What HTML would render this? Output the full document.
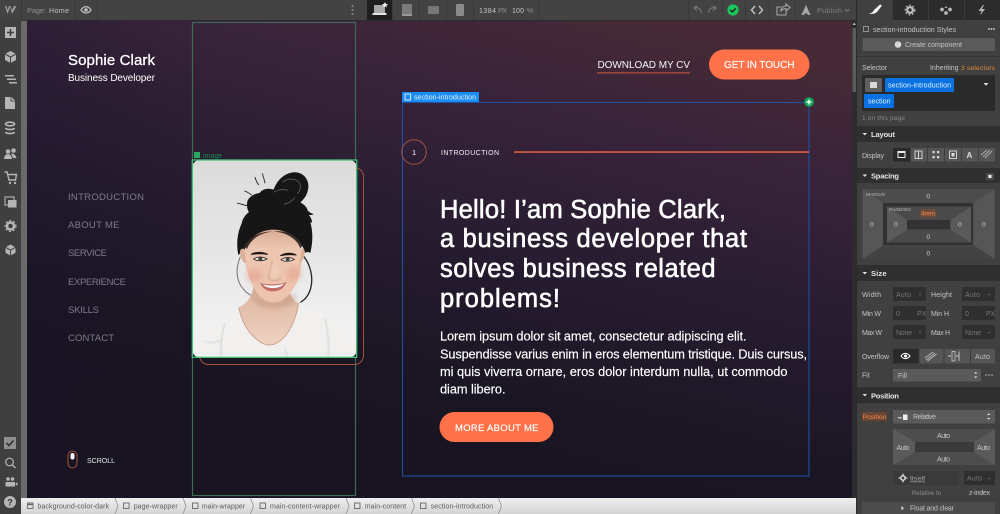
<!DOCTYPE html>
<html><head><meta charset="utf-8"><style>
html,body{margin:0;padding:0;background:#333;width:1000px;height:514px;overflow:hidden}
svg{display:block;filter:blur(.2px)}
text{font-family:"Liberation Sans",sans-serif;white-space:pre}
.w{fill:#fff}
.h{fill:#fff;font-size:25.5px;stroke:#fff;stroke-width:.6px}
.p{fill:#fff;font-size:12.8px;stroke:#fff;stroke-width:.15px}
.n{fill:#7f7a8a;font-size:9.5px}
.t{fill:#a8a8a8;font-size:7px}
.l{fill:#c4c4c4;font-size:7px}
.d{fill:#767676;font-size:7px}
.hd{fill:#e6e6e6;font-size:7.5px;font-weight:bold}
.b{fill:#5c5c5c;font-size:7px}
.m{fill:#d0d0d0;font-size:6.5px}
</style></head><body>
<svg width="1000" height="514" viewBox="0 0 1000 514" xmlns="http://www.w3.org/2000/svg">
<defs>
<linearGradient id="bg" gradientUnits="userSpaceOnUse" x1="560" y1="0" x2="440" y2="498">
<stop offset="0" stop-color="#462a36"/><stop offset=".22" stop-color="#38233a"/><stop offset=".5" stop-color="#271c30"/><stop offset=".8" stop-color="#191522"/><stop offset="1" stop-color="#181420"/>
</linearGradient>
<linearGradient id="lf" x1="0" x2="1" y1="0" y2="0"><stop offset="0" stop-color="#1a1530" stop-opacity=".22"/><stop offset=".6" stop-color="#1a1530" stop-opacity="0"/></linearGradient>
<linearGradient id="ph" x1="0" x2="0" y1="0" y2="1"><stop offset="0" stop-color="#dbdcda"/><stop offset=".5" stop-color="#e7e7e7"/><stop offset="1" stop-color="#f5f5f5"/></linearGradient>
<linearGradient id="bc" x1="0" x2="0" y1="0" y2="1"><stop offset="0" stop-color="#efefef"/><stop offset="1" stop-color="#d4d4d4"/></linearGradient>
<linearGradient id="sk" x1="0" x2="0" y1="0" y2="1"><stop offset="0" stop-color="#cfa38c"/><stop offset=".3" stop-color="#e2bda8"/><stop offset="1" stop-color="#efd2c2"/></linearGradient>
<linearGradient id="fc" x1="0" x2="0" y1="0" y2="1"><stop offset="0" stop-color="#d9ab94"/><stop offset=".25" stop-color="#ecc6b0"/><stop offset="1" stop-color="#eec4ae"/></linearGradient>
<clipPath id="pc"><rect x="22" y="45" width="493" height="592" rx="22"/></clipPath>
<filter id="b0" x="-10%" y="-10%" width="120%" height="120%"><feGaussianBlur stdDeviation="1"/></filter>
<filter id="b1" x="-20%" y="-20%" width="140%" height="140%"><feGaussianBlur stdDeviation="2"/></filter>
<filter id="b2" x="-50%" y="-50%" width="200%" height="200%"><feGaussianBlur stdDeviation="9"/></filter>
</defs>

<rect width="1000" height="514" fill="#3a3a3a"/>
<!-- canvas -->
<rect x="27" y="20" width="826" height="478" fill="url(#bg)"/>
<rect x="27" y="20" width="300" height="478" fill="url(#lf)"/>
<rect x="21" y="20" width="6" height="478" fill="#6a6a6a"/>

<!-- green column -->
<rect x="192.5" y="22.5" width="163" height="473" fill="none" stroke="#3f6a58" stroke-width="1.2"/>

<!-- header -->
<text x="68" y="65" class="w" font-size="15" textLength="87" stroke="#fff" stroke-width=".3">Sophie Clark</text>
<text x="68" y="81" class="w" font-size="10" textLength="87">Business Developer</text>

<!-- nav -->
<text x="68" y="200" class="n" textLength="76">INTRODUCTION</text>
<text x="68" y="228" class="n" textLength="51.5">ABOUT ME</text>
<text x="68" y="256" class="n" textLength="39">SERVICE</text>
<text x="68" y="285" class="n" textLength="58">EXPERIENCE</text>
<text x="68" y="313" class="n" textLength="31">SKILLS</text>
<text x="68" y="341" class="n" textLength="46">CONTACT</text>

<!-- scroll -->
<rect x="68" y="451" width="9" height="17" rx="4.5" fill="none" stroke="#a5503f" stroke-width="1"/>
<rect x="70.5" y="453" width="4" height="6.5" rx="2" fill="#fff"/>
<text x="87" y="463" class="w" font-size="7" textLength="28" fill-opacity=".9">SCROLL</text>

<!-- top right CTAs -->
<text x="597.5" y="68" class="w" font-size="10" textLength="92.5" fill-opacity=".95">DOWNLOAD MY CV</text>
<rect x="597" y="72.3" width="93" height="1.2" fill="#b4523f"/>
<rect x="709" y="49.5" width="100.5" height="30" rx="15" fill="#ff7148"/>
<text x="724" y="68" class="w" font-size="10" textLength="70.5" stroke="#fff" stroke-width=".15">GET IN TOUCH</text>

<!-- section -->
<rect x="402.5" y="102.5" width="406.5" height="373.5" fill="none" stroke="#1f4fa0" stroke-width="1.1"/>
<rect x="402" y="92" width="77" height="10" fill="#1a8cf5"/>
<rect x="405" y="94" width="5.500" height="6" fill="none" stroke="#fff" stroke-width=".8"/>
<text x="414" y="99.5" class="w" font-size="7" textLength="62" fill-opacity=".9">section-introduction</text>
<circle cx="809" cy="102" r="4.8" fill="#11a85a"/>
<path d="M809 99.5v5M806.5 102h5" stroke="#fff" stroke-width="1.4"/>

<circle cx="414" cy="152" r="12.3" fill="none" stroke="#a5503f" stroke-width="1"/>
<text x="412" y="155" class="w" font-size="7.5">1</text>
<text x="441" y="155" class="w" font-size="7" textLength="58" fill-opacity=".95">INTRODUCTION</text>
<rect x="514" y="151.3" width="295" height="1.5" fill="#e8623f"/>

<!-- headline -->
<text x="440" y="218" class="h" textLength="286">Hello! I’am Sophie Clark,</text>
<text x="440" y="247" class="h" textLength="307">a business developer that</text>
<text x="440" y="277" class="h" textLength="275.5">solves business related</text>
<text x="440" y="307" class="h" textLength="120">problems!</text>

<text x="440" y="340.5" class="p" textLength="306.5">Lorem ipsum dolor sit amet, consectetur adipiscing elit.</text>
<text x="440" y="358.3" class="p" textLength="367">Suspendisse varius enim in eros elementum tristique. Duis cursus,</text>
<text x="440" y="376" class="p" textLength="347.5">mi quis viverra ornare, eros dolor interdum nulla, ut commodo</text>
<text x="440" y="393.5" class="p" textLength="65.5">diam libero.</text>

<rect x="439.5" y="412" width="114" height="30" rx="15" fill="#ff7148"/>
<text x="455" y="431" class="w" font-size="9.5" textLength="83.5" stroke="#fff" stroke-width=".15">MORE ABOUT ME</text>

<!-- image frame -->
<rect x="199.5" y="167.5" width="164" height="197" rx="9" fill="none" stroke="#a5503f" stroke-width="1"/>
<g transform="translate(185 145) scale(.33333)">
 <rect x="22" y="45" width="493" height="592" fill="#201a2c"/>
 <g clip-path="url(#pc)">
  <rect x="22" y="45" width="493" height="592" fill="url(#ph)"/>
  <!-- stray strands -->
  <path d="M166 335c-12 30-14 62 2 88 8 12 18 22 30 28" fill="none" stroke="#77716f" stroke-width="3" filter="url(#b0)"/>
  <path d="M352 330c18 18 30 50 28 82-2 26-14 50-34 60" fill="none" stroke="#2a2526" stroke-width="4" filter="url(#b0)"/>
  <!-- shirt -->
  <g filter="url(#b0)">
   <path d="M22 640V598c10-22 28-42 56-56 30-14 60-30 86-55 4-4 176-14 178-12 30 12 62 22 92 38 36 20 62 52 81 92v35z" fill="#f1f0ef"/>
   <path d="M120 535c-10 30-14 62-12 100M420 520c10 36 12 76 10 115M60 590c15 4 30 3 46-2M300 610c2 8 6 18 8 28" stroke="#d4d3d1" stroke-width="3.500" fill="none" filter="url(#b1)"/>
   <!-- neck and chest -->
   <path d="M205 420c0 28-14 52-44 68 8 30 20 62 42 84 16 16 32 28 50 28 22 0 44-18 60-44 14-24 24-54 28-82-20-8-30-30-30-56z" fill="url(#sk)"/>
   <path d="M161 488c8 34 22 64 42 84 16 16 32 28 50 28 22 0 44-18 60-44 14-24 24-54 28-82" fill="none" stroke="#c69880" stroke-width="2.500"/>
  </g>
  <path d="M205 445c20 32 90 36 122-2l4 24c-34 28-100 30-124 0z" fill="#b98a72" opacity=".55" filter="url(#b2)"/>
  <!-- hair mass -->
  <g filter="url(#b0)">
   <path d="M160 330c-6-30-4-62 8-90 8-18 16-28 24-38-6-10-8-22-4-36 8-14 22-20 36-22 8-12 24-16 42-10 8-24 28-48 58-52 30-2 48 20 46 46-2 20-12 34-24 44 14 8 20 16 22 24 6 8 12 8 18 12-6 2-10 2-14 2 10 14 12 26 4 22 8 28 8 58 0 92-6-4-12-4-16 0-10-50-80-90-174-10-6-2-16 6-26 16z" fill="#161313"/>
   <ellipse cx="262" cy="240" rx="92" ry="60" fill="#171414"/>
   <path d="M222 120c-6-6-10-16-12-24M186 182c-10-2-20-6-30-8M200 150c-8-6-14-10-22-12M355 215c10 4 18 14 22 24M345 188c8-3 12-3 18 0M240 115c-2-10-4-18-8-30" stroke="#1c1818" stroke-width="2.500" fill="none"/>
   <path d="M292 112c14-12 38-14 50 0 8 12 4 26-6 34M266 142c16-10 30-10 44-6M296 178c14-2 28-12 34-20" stroke="#625b5b" stroke-width="2.500" fill="none"/>
  </g>
  <!-- face -->
  <g filter="url(#b0)">
   <path d="M178 318c6-34 44-64 88-64 40 0 78 28 84 62 2 34-2 66-12 90-10 26-30 50-48 60-8 5-18 7-28 6-26-2-46-24-58-48-14-28-28-70-26-106z" fill="url(#fc)"/>
   <path d="M178 312c-8-4-14 2-13 12 2 16 8 28 18 32zM350 312c6-3 10 2 9 12-2 16-8 26-16 32z" fill="#dcae96"/>
  </g>
  <path d="M186 312c10-28 40-50 78-52-36-2-70 14-86 44zM346 310c-8-26-40-48-80-50 38-6 72 12 86 42z" fill="#3a2e2c" filter="url(#b0)"/>
  <ellipse cx="208" cy="392" rx="24" ry="22" fill="#e0907e" opacity=".42" filter="url(#b2)"/>
  <ellipse cx="326" cy="386" rx="22" ry="22" fill="#e0907e" opacity=".42" filter="url(#b2)"/>
  <path d="M262 345c-4 24-10 42-12 52 4 8 12 10 18 10s16-2 20-10" fill="none" stroke="#c08e76" stroke-width="2.500" filter="url(#b1)"/>
  <ellipse cx="268" cy="375" rx="9" ry="24" fill="#f6dccb" opacity=".6" filter="url(#b2)"/>
  <!-- brows -->
  <path d="M198 328c14-8 34-8 50 0-16-3-34-2-50 0zM286 332c14-9 34-10 48-2-14-2-32-1-48 2z" fill="#1e1919" stroke="#1e1919" stroke-width="3" filter="url(#b0)"/>
  <!-- eyes -->
  <g filter="url(#b0)">
   <path d="M206 342c10-8 28-8 40 0-12 7-30 7-40 0z" fill="#e9e4de" stroke="#2a2525" stroke-width="2.500"/>
   <path d="M288 344c10-8 28-9 40-1-12 7-30 8-40 1z" fill="#e9e4de" stroke="#2a2525" stroke-width="2.500"/>
   <circle cx="226" cy="341" r="6" fill="#433f38"/><circle cx="308" cy="342" r="6" fill="#433f38"/>
  </g>
  <!-- mouth -->
  <g filter="url(#b0)">
   <path d="M226 414c22 6 56 6 78-3-8 22-24 28-40 28-18 0-32-8-38-25z" fill="#c46a68"/>
   <path d="M233 418c20 5 44 5 64-2-6 9-18 13-31 13-14 0-26-3-33-11z" fill="#fafafa"/>
  </g>
 </g>
 <rect x="22" y="45" width="493" height="592" fill="none" stroke="#44c178" stroke-width="4"/>
</g>
<rect x="194" y="152" width="6" height="6" fill="#28a760"/>
<text x="203" y="158" font-size="7" fill="#1f8a52" textLength="19">image</text>

<!-- top bar -->
<rect x="0" y="0" width="1000" height="20" fill="#434343"/>
<rect x="0" y="20" width="853" height=".8" fill="#2b2b2b"/>
<path d="M5 6l2.500 8 2.800-7 1.700 7 4.500-8-2.500 0-2 4-1.500-4h-1.400l-1.600 4-1-4z" fill="#9c9c9c"/>
<g fill="#393939"><rect x="21" y="0" width="1" height="20"/><rect x="75" y="0" width="1" height="20"/><rect x="97" y="0" width="1" height="20"/><rect x="392" y="0" width="1" height="20"/><rect x="419" y="0" width="1" height="20"/><rect x="446" y="0" width="1" height="20"/><rect x="473" y="0" width="1" height="20"/><rect x="538" y="0" width="1" height="20"/><rect x="688" y="0" width="1" height="20"/><rect x="722" y="0" width="1" height="20"/><rect x="745" y="0" width="1" height="20"/><rect x="769" y="0" width="1" height="20"/><rect x="795" y="0" width="1" height="20"/></g>
<text x="27" y="13" font-size="7.5" textLength="19" fill="#8e8e8e">Page:</text>
<text x="49" y="13" class="l" font-size="7.5" textLength="20">Home</text>
<path d="M81 10c3-4.500 7-4.500 10 0-3 4-7 4-10 0z" fill="none" stroke="#bdbdbd" stroke-width="1.300"/><circle cx="86" cy="10" r="1.800" fill="#bdbdbd"/>
<g fill="#8a8a8a"><circle cx="352.5" cy="6" r="1"/><circle cx="352.5" cy="10" r="1"/><circle cx="352.5" cy="14" r="1"/></g>
<rect x="367" y="0" width="25" height="20" fill="#1f1f1f"/>
<rect x="374" y="5" width="11" height="8" fill="#a8a8a8"/><rect x="372.5" y="13" width="14" height="2" fill="#e0e0e0"/>
<path d="M385 2l.9 1.900 2.100.2-1.600 1.300.5 2-1.900-1.100-1.900 1.100.5-2-1.600-1.300 2.100-.2z" fill="#fff"/>
<rect x="402" y="4" width="10" height="10" fill="#7a7a7a"/><rect x="402" y="14" width="10" height="2" fill="#999"/>
<rect x="428" y="6" width="11" height="8" rx="1" fill="#777"/>
<rect x="456" y="4" width="8" height="12" rx="1" fill="#8a8a8a"/>
<text x="479" y="13" class="l" font-size="7.500" textLength="17">1384</text>
<text x="498" y="13" font-size="7.500" textLength="9" fill="#8e8e8e">PX</text>
<text x="512" y="13" class="l" font-size="7.500" textLength="12">100</text>
<text x="526.5" y="13" font-size="7.500" fill="#8e8e8e">%</text>
<path d="M701 13c1-4-3-6-6-5M697 5.500l-3 2.500 3 2.500" fill="none" stroke="#777" stroke-width="1.100"/>
<path d="M709 13c-1-4 3-6 6-5M713 5.500l3 2.500-3 2.500" fill="none" stroke="#777" stroke-width="1.100"/>
<circle cx="733" cy="10" r="5.600" fill="#1cc45c"/><path d="M730.300 10l2 2 3.400-3.600" fill="none" stroke="#1a1a1a" stroke-width="1.300"/>
<path d="M755 6l-3.500 4 3.500 4M759 6l3.500 4-3.500 4" fill="none" stroke="#bdbdbd" stroke-width="1.500"/>
<path d="M786 10v5h-9V7h4M781 11c0-3 2-5 5-5V4l4 3.500-4 3.500V8.500c-2 0-3.500 1-5 2.500z" fill="none" stroke="#a8a8a8" stroke-width="1.100"/>
<path d="M806 5l4.500 10h-2l-2.500-2-2.500 2h-2z" fill="#a8a8a8"/>
<text x="817" y="13" font-size="7.500" textLength="25" fill="#7d7d7d">Publish</text>
<path d="M845 9l2.200 2.200 2.200-2.200" fill="none" stroke="#7d7d7d" stroke-width="1"/>

<!-- scrollbar -->
<rect x="852" y="20" width="5" height="478" fill="#2c2c2c"/>
<rect x="852.5" y="28" width="3.500" height="64" fill="#5c5c5c"/>
<path d="M852.5 25l1.700-2.500 1.700 2.500z" fill="#bdbdbd"/>

<!-- left icons -->
<rect x="0" y="20" width="21" height="494" fill="#3f3f3f"/>
<rect x="5" y="27" width="11" height="11" fill="#b5b5b5"/><path d="M10.500 29v7M7 32.500h7" stroke="#3a3a3a" stroke-width="1.500"/>
<path d="M10.500 51l5.500 3v6l-5.500 3-5.500-3v-6z" fill="#b5b5b5"/><path d="M5 54l5.500 3 5.500-3M10.500 57v6" stroke="#3f3f3f" stroke-width="1" fill="none"/>
<g fill="#b5b5b5"><rect x="5" y="75" width="9" height="1.500"/><rect x="7" y="78.500" width="9" height="1.500"/><rect x="9" y="82" width="8" height="1.500"/></g>
<path d="M5 97h6.500l3.500 3.500V109H5z" fill="#b5b5b5"/><path d="M11 97v4h4" fill="none" stroke="#3f3f3f" stroke-width=".8"/>
<g fill="none" stroke="#b5b5b5" stroke-width="1.700"><ellipse cx="10" cy="124" rx="4.500" ry="1.800"/><path d="M5.500 128c1 2 8 2 9 0M5.500 132c1 2 8 2 9 0"/></g>
<g fill="#b5b5b5"><circle cx="8" cy="151.500" r="2.300"/><circle cx="13.500" cy="150.500" r="2.300"/><path d="M4 159c0-3 2-5 4-5s4 2 4 5zM11 153.500c3 0 5 2 5.500 4.500H13z"/></g>
<path d="M4.500 172h2.500l2 8h6.500l1-5.500H8" fill="none" stroke="#b5b5b5" stroke-width="1.400"/><circle cx="10" cy="183" r="1.200" fill="#b5b5b5"/><circle cx="15" cy="183" r="1.200" fill="#b5b5b5"/>
<rect x="5" y="197" width="9" height="8" fill="none" stroke="#b5b5b5" stroke-width="1.100"/><rect x="8" y="200" width="8.500" height="7.500" fill="#b5b5b5"/>
<circle cx="10.500" cy="226" r="3.500" fill="none" stroke="#b5b5b5" stroke-width="2.500"/><circle cx="10.500" cy="226" r="5.400" fill="none" stroke="#b5b5b5" stroke-width="1.200" stroke-dasharray="2 2"/>
<path d="M10.500 244.500l5 2.800v5.500l-5 2.800-5-2.800v-5.500z" fill="#b5b5b5"/><path d="M5.500 247.300l5 2.800 5-2.800M10.500 250v5.500" stroke="#3f3f3f" stroke-width="1" fill="none"/>
<rect x="4" y="437" width="12" height="12" fill="#8f8f8f"/><path d="M6.500 443l2.500 2.500 4.500-5" fill="none" stroke="#2c2c2c" stroke-width="1.500"/>
<circle cx="9.500" cy="462" r="3.800" fill="none" stroke="#b5b5b5" stroke-width="1.200"/><path d="M12.500 465l3 3" stroke="#b5b5b5" stroke-width="1.300"/>
<g fill="#b5b5b5"><circle cx="8" cy="479" r="1.800"/><circle cx="12.500" cy="479" r="1.800"/><rect x="5.500" y="482" width="9.500" height="4.500"/><path d="M15.500 483.500l2-1.200v3.500l-2-1.200z"/></g>
<circle cx="10" cy="502" r="6" fill="#b5b5b5"/><text x="7.300" y="505.500" font-size="9" font-weight="bold" fill="#333">?</text>

<!-- breadcrumbs -->
<rect x="21" y="498" width="836" height="16" fill="url(#bc)"/>
<g fill="none" stroke="#666" stroke-width=".9">
<rect x="27.500" y="503" width="5.500" height="5.500"/><path d="M27.500 504.500h5.500" stroke-width="1.400"/>
<rect x="123.500" y="503" width="5.500" height="5.500"/><rect x="192.500" y="503" width="5.500" height="5.500"/><rect x="260" y="503" width="5.500" height="5.500"/><rect x="354.500" y="503" width="5.500" height="5.500"/><rect x="420.500" y="503" width="5.500" height="5.500"/>
</g>
<g fill="none" stroke="#9a9a9a" stroke-width=".9">
<path d="M115 498l3 8-3 8M183 498l3 8-3 8M250.500 498l3 8-3 8M346 498l3 8-3 8M411.500 498l3 8-3 8M498.500 498l3 8-3 8"/>
</g>
<text x="37.500" y="508.500" class="b" textLength="71.500">background-color-dark</text>
<text x="133.700" y="508.500" class="b" textLength="44">page-wrapper</text>
<text x="201.700" y="508.500" class="b" textLength="43.500">main-wrapper</text>
<text x="270" y="508.500" class="b" textLength="70">main-content-wrapper</text>
<text x="364.700" y="508.500" class="b" textLength="41.500">main-content</text>
<text x="430.700" y="508.500" class="b" textLength="62.500">section-introduction</text>

<!-- right panel -->
<rect x="857" y="0" width="143" height="514" fill="#404040"/>
<rect x="892" y="0" width="108" height="20" fill="#2c2c2c"/>
<rect x="856" y="0" width="1" height="514" fill="#2b2b2b"/>
<g fill="#3d3d3d"><rect x="892" y="0" width="1" height="20"/><rect x="928" y="0" width="1" height="20"/><rect x="964" y="0" width="1" height="20"/></g>
<path d="M868 13c3 1 5-1 6-3l6-5.500 2 1-5 6.500c-2 2-6 2.500-9 1z" fill="#f2f2f2"/>
<circle cx="910" cy="10" r="2.800" fill="none" stroke="#c4c4c4" stroke-width="2.200"/><circle cx="910" cy="10" r="4.800" fill="none" stroke="#c4c4c4" stroke-width="1.200" stroke-dasharray="1.800 1.800"/>
<g fill="#b5b5b5"><circle cx="942" cy="9.500" r="1.900"/><circle cx="946" cy="13" r="1.900"/><circle cx="950" cy="9.500" r="1.900"/><path d="M946 6l1.500 2h-3z"/></g>
<path d="M983 5l-4.500 6h3l-1.500 4.500 5-6.500h-3l2-4z" fill="#b5b5b5"/>

<rect x="863.500" y="26.500" width="5" height="5" fill="none" stroke="#999" stroke-width=".9"/>
<text x="873" y="32" class="l" font-size="6.800" textLength="83">section-introduction Styles</text>
<g fill="#d8d8d8"><circle cx="989" cy="29" r=".9"/><circle cx="991.500" cy="29" r=".9"/><circle cx="994" cy="29" r=".9"/></g>
<rect x="862.500" y="38" width="132.500" height="13" rx="1" fill="#5a5a5a"/>
<circle cx="898" cy="44.500" r="3.300" fill="#d8d8d8"/>
<text x="905" y="47" class="l" font-size="6.800" textLength="57">Create component</text>
<rect x="857" y="56" width="143" height=".8" fill="#333"/>

<text x="862" y="70" class="l" font-size="6.500" textLength="25">Selector</text>
<text x="930" y="70" class="l" font-size="6.500" textLength="28.500">Inheriting</text>
<text x="961" y="70" font-size="6.500" fill="#e38f3c" textLength="34">3 selectors</text>
<rect x="862" y="75" width="133" height="36" rx="1" fill="#2a2a2a"/>
<rect x="865" y="78" width="17" height="14" rx="1" fill="#606060"/>
<rect x="870" y="82" width="7" height="6" fill="#d8d8d8"/>
<rect x="885" y="78" width="69" height="14" rx="1" fill="#0a72e0"/>
<text x="888" y="87.500" fill="#e8f2ff" font-size="7" textLength="63">section-introduction</text>
<path d="M983.500 83l2.500 2.800 2.500-2.800z" fill="#e0e0e0"/>
<rect x="864" y="94" width="30" height="14" rx="1" fill="#0a72e0"/>
<text x="868" y="103.500" fill="#e8f2ff" font-size="7" textLength="22.500">section</text>
<text x="862" y="120" font-size="6.500" textLength="43" fill="#8a8a8a">1 on this page</text>

<!-- Layout -->
<rect x="857" y="126" width="143" height="16" fill="#2f2f2f"/>
<path d="M862.500 133l2.300 2.400 2.300-2.400z" fill="#e6e6e6"/>
<text x="871" y="137" class="hd" textLength="24">Layout</text>
<text x="862" y="158" class="l" font-size="6.800" textLength="22">Display</text>
<rect x="893" y="148" width="102" height="13.500" fill="#555"/>
<rect x="893" y="148" width="17" height="13.500" fill="#2a2a2a"/>
<g fill="#3a3a3a"><rect x="910" y="148" width=".8" height="13.500"/><rect x="927" y="148" width=".8" height="13.500"/><rect x="944" y="148" width=".8" height="13.500"/><rect x="961" y="148" width=".8" height="13.500"/><rect x="978" y="148" width=".8" height="13.500"/></g>
<rect x="898" y="151.500" width="7" height="6" fill="none" stroke="#eee" stroke-width="1"/><rect x="898" y="151" width="7" height="2" fill="#eee"/>
<rect x="915" y="151" width="7" height="7.500" fill="none" stroke="#ddd" stroke-width=".9"/><path d="M918.500 151v7.500" stroke="#ddd"/>
<g fill="#ddd"><rect x="932.500" y="151" width="2.200" height="2.200"/><rect x="937" y="151" width="2.200" height="2.200"/><rect x="932.500" y="156" width="2.200" height="2.200"/><rect x="937" y="156" width="2.200" height="2.200"/></g>
<rect x="949.500" y="151" width="7" height="7.500" fill="none" stroke="#ddd" stroke-width=".9"/><rect x="951.500" y="153" width="3" height="3.500" fill="#ddd"/>
<text x="966.500" y="158" fill="#ddd" font-size="8" font-weight="bold">A</text>
<path d="M983 157l7-7M985 158l7-7M981 155l6-5" stroke="#aaa" stroke-width="1"/>

<!-- Spacing -->
<rect x="857" y="168" width="143" height="15" fill="#2f2f2f"/>
<path d="M862.500 174.500l2.300 2.400 2.300-2.400z" fill="#e6e6e6"/>
<text x="871" y="178.500" class="hd" textLength="28">Spacing</text>
<rect x="986" y="173" width="8" height="7" fill="#4a4a4a"/><rect x="988.500" y="174.800" width="3" height="3.200" fill="#eee"/>

<rect x="862.500" y="189" width="132" height="70" fill="#4c4c4c"/>
<path d="M862.500 189l21 14v42l-21 14zM994.500 189l-21 14v42l21 14z" fill="#565656"/>
<path d="M862.500 259l21-14h90l21 14z" fill="#434343"/>
<rect x="883" y="203" width="90" height="42" fill="#323232"/>
<rect x="887" y="206.500" width="84" height="36" fill="#4a4a4a"/>
<path d="M887 206.500l20 13.500v10l-20 12.500zM971 206.500l-20 13.500v10l20 12.500z" fill="#5a5a5a"/>
<rect x="907" y="220" width="43" height="9.500" fill="#333"/>
<text x="866" y="196" fill="#bdbdbd" font-size="4.800" font-style="italic" textLength="19">MARGIN</text>
<text x="889" y="211" fill="#bdbdbd" font-size="4.800" font-style="italic" textLength="22">PADDING</text>
<rect x="920" y="209" width="16" height="8.500" fill="#6e4a3a"/>
<text x="921" y="215.500" fill="#f08a4e" font-size="6.500" textLength="14">4rem</text>
<text x="926.500" y="198.500" class="m">0</text><text x="870" y="226.500" class="m">0</text><text x="894" y="226.500" class="m">0</text><text x="958" y="226.500" class="m">0</text><text x="982" y="226.500" class="m">0</text><text x="926.500" y="239" class="m">0</text><text x="926.500" y="255.500" class="m">0</text>

<!-- Size -->
<rect x="857" y="265" width="143" height="16" fill="#2f2f2f"/>
<path d="M862.500 272l2.300 2.400 2.300-2.400z" fill="#e6e6e6"/>
<text x="871" y="276" class="hd" textLength="15.500">Size</text>
<g fill="#2f2f2f">
<rect x="893" y="287" width="33" height="14" rx="1"/><rect x="962" y="287" width="33" height="14" rx="1"/>
<rect x="893" y="306" width="33" height="14" rx="1"/><rect x="962" y="306" width="33" height="14" rx="1"/>
<rect x="893" y="325" width="33" height="14" rx="1"/><rect x="962" y="325" width="33" height="14" rx="1"/>
</g>
<text x="862" y="297" class="l" font-size="6.800" textLength="19">Width</text>
<text x="931" y="297" class="l" font-size="6.800" textLength="21">Height</text>
<text x="862" y="316" class="l" font-size="6.800" textLength="19">Min W</text>
<text x="931" y="316" class="l" font-size="6.800" textLength="18">Min H</text>
<text x="862" y="335" class="l" font-size="6.800" textLength="20">Max W</text>
<text x="931" y="335" class="l" font-size="6.800" textLength="19">Max H</text>
<text x="896" y="297" class="d" font-size="6.800" textLength="15">Auto</text><text x="965" y="297" class="d" font-size="6.800" textLength="15">Auto</text>
<text x="896" y="316" class="d" font-size="6.800">0</text><text x="917" y="316" class="d" font-size="5.800">PX</text>
<text x="965" y="316" class="d" font-size="6.800">0</text><text x="986" y="316" class="d" font-size="5.800">PX</text>
<text x="896" y="335" class="d" font-size="6.800" textLength="16">None</text><text x="965" y="335" class="d" font-size="6.800" textLength="16">None</text>
<g fill="#767676"><rect x="919" y="294" width="2" height=".8"/><rect x="988" y="294" width="2" height=".8"/><rect x="919" y="332" width="2" height=".8"/><rect x="988" y="332" width="2" height=".8"/></g>

<!-- Overflow -->
<text x="862" y="359" class="l" font-size="6.800" textLength="27">Overflow</text>
<rect x="893" y="349" width="102" height="14.500" fill="#555"/>
<rect x="893" y="349" width="25.500" height="14.500" fill="#2a2a2a"/>
<g fill="#3a3a3a"><rect x="918.500" y="349" width="1" height="14.500"/><rect x="943.500" y="349" width="1" height="14.500"/><rect x="970" y="349" width="1" height="14.500"/></g>
<path d="M901 356c2.500-3.500 6-3.500 9 0-3 3.500-6.500 3.500-9 0z" fill="none" stroke="#fff" stroke-width="1"/><circle cx="905.500" cy="356" r="1.500" fill="#fff"/>
<path d="M926 360l9-7M927.500 361l9-7M925 358l8-6" stroke="#bbb" stroke-width=".9"/>
<rect x="952" y="351.500" width="3" height="9.500" fill="none" stroke="#ccc" stroke-width=".8"/><path d="M959 351.500v9.500M948 356h3M956 356h3" stroke="#ccc" stroke-width=".9"/>
<text x="975" y="359" class="l" font-size="6.800" textLength="15">Auto</text>
<!-- Fit -->
<text x="862" y="377.500" class="l" font-size="6.800">Fit</text>
<rect x="893" y="369" width="88" height="12.500" rx="1" fill="#5a5a5a"/>
<text x="898" y="377.800" class="l" font-size="6.800">Fill</text>
<path d="M974 373.500l1.700-1.800 1.700 1.800zM974 376.500l1.700 1.800 1.700-1.800z" fill="#ddd"/>
<g fill="#bbb"><circle cx="986" cy="375" r=".8"/><circle cx="989" cy="375" r=".8"/><circle cx="992" cy="375" r=".8"/></g>

<!-- Position -->
<rect x="857" y="387" width="143" height="16" fill="#2f2f2f"/>
<path d="M862.500 394l2.300 2.400 2.300-2.400z" fill="#e6e6e6"/>
<text x="871" y="398.500" class="hd" textLength="28">Position</text>
<rect x="862" y="412" width="25" height="9" fill="#6a4534"/>
<text x="862.500" y="419" fill="#f08a4e" font-size="6.800" textLength="24">Position</text>
<rect x="893" y="410" width="102" height="13.500" rx="1" fill="#5a5a5a"/>
<rect x="903" y="414.500" width="4.500" height="5.500" fill="#eee"/><rect x="898" y="417" width="4" height="1.500" fill="#bbb"/>
<text x="913" y="419" class="l" font-size="6.800" textLength="23">Relative</text>
<path d="M987 415l1.700-1.800 1.700 1.800zM987 418l1.700 1.800 1.700-1.800z" fill="#ddd"/>

<rect x="893" y="429" width="102" height="36" fill="#4d4d4d"/>
<path d="M893 429l22 13v10l-22 13zM995 429l-21 13v10l21 13z" fill="#5a5a5a"/>
<rect x="915" y="442" width="59" height="10" fill="#3a3a3a"/>
<text x="937" y="438" class="l" font-size="6.800" textLength="13">Auto</text>
<text x="896.500" y="450" class="l" font-size="6.800" textLength="13">Auto</text>
<text x="977" y="450" class="l" font-size="6.800" textLength="13">Auto</text>
<text x="937" y="461.500" class="l" font-size="6.800" textLength="13">Auto</text>

<rect x="893" y="471" width="66" height="14" fill="#3a3a3a"/>
<circle cx="903" cy="478" r="2.200" fill="none" stroke="#eee" stroke-width="1.300"/><path d="M903 473.500v2M903 480.500v2M898.500 478h2M905.500 478h2" stroke="#eee" stroke-width="1"/>
<text x="910" y="480.500" fill="#aaa" font-size="6.800" textLength="15" text-decoration="underline">Itself</text>
<rect x="964" y="471" width="31" height="14" rx="1" fill="#2f2f2f"/>
<text x="967" y="480.500" class="d" font-size="6.800" textLength="15">Auto</text>
<rect x="988" y="478" width="2" height=".8" fill="#767676"/>
<text x="912" y="495" fill="#8e8e8e" font-size="6" textLength="29">Relative to</text>
<text x="969" y="495" class="l" font-size="6" textLength="21">z-index</text>

<rect x="862" y="502" width="133" height="12" fill="#4c4c4c"/>
<path d="M901.500 506l2.400 2.200-2.400 2.200z" fill="#ddd"/>
<text x="910" y="510.500" class="l" font-size="6.800" textLength="44">Float and clear</text>
</svg>
</body></html>
